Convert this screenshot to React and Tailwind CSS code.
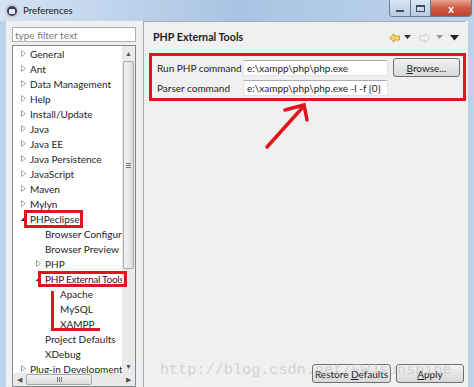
import React from 'react'

const rows = [
  ['General', 0, 'c'],
  ['Ant', 0, 'c'],
  ['Data Management', 0, 'c'],
  ['Help', 0, 'c'],
  ['Install/Update', 0, 'c'],
  ['Java', 0, 'c'],
  ['Java EE', 0, 'c'],
  ['Java Persistence', 0, 'c'],
  ['JavaScript', 0, 'c'],
  ['Maven', 0, 'c'],
  ['Mylyn', 0, 'c'],
  ['PHPeclipse', 0, 'o', 'box1'],
  ['Browser Configuration', 1, null],
  ['Browser Preview Defaults', 1, null],
  ['PHP', 1, 'c'],
  ['PHP External Tools', 1, 'o', 'box2'],
  ['Apache', 2, null],
  ['MySQL', 2, null],
  ['XAMPP', 2, null],
  ['Project Defaults', 1, null],
  ['XDebug', 1, null],
  ['Plug-in Development', 0, 'c'],
]

const indent = ['pl-[5px]', 'pl-[20px]', 'pl-[35px]']

function Twisty({ kind }) {
  if (kind === 'c')
    return (
      <svg width="12" height="15" viewBox="0 0 12 15">
        <path d="M3.5 4.5 L7.5 7.5 L3.5 10.5 Z" fill="none" stroke="#a6a6a6" strokeWidth="1" />
      </svg>
    )
  if (kind === 'o')
    return (
      <svg width="12" height="15" viewBox="0 0 12 15">
        <path d="M7.5 5 L7.5 10 L2.5 10 Z" fill="#333" />
      </svg>
    )
  return <span className="w-[12px]" />
}

function TreeRow({ label, level, kind, box }) {
  return (
    <div className={`h-[15px] flex items-center whitespace-nowrap ${indent[level]}`}>
      <span className="w-[12px] flex-none flex items-center">
        <Twisty kind={kind} />
      </span>
      <span className={`relative text-[#1e1e1e] ${box === 'box2' ? 'tracking-[-0.25px]' : ''}`}>
        {label}
        {box === 'box1' && (
          <span className="absolute z-20 -left-[6px] -right-[4px] -top-[4px] -bottom-[4px] border-[3px] border-[#e0161f]" />
        )}
        {box === 'box2' && (
          <span className="absolute z-20 -left-[7px] -right-[3px] -top-[3px] -bottom-[3px] border-[3px] border-[#e0161f]" />
        )}
      </span>
    </div>
  )
}

function Tree() {
  return (
    <div className="relative flex-1 bg-white border border-[#828790] flex flex-col overflow-hidden">
      <div className="flex flex-1 min-h-0">
        <div className="flex-1 min-w-0">
          {rows.map(r => (
            <TreeRow key={r[0]} label={r[0]} level={r[1]} kind={r[2]} box={r[3]} />
          ))}
        </div>
        {/* vertical scrollbar */}
        <div className="relative z-10 w-[13px] flex-none bg-[#eaeaea] flex flex-col items-center">
          <div className="h-[14px] flex items-center justify-center text-[7px] text-[#555]">▲</div>
          <div className="w-[11px] h-[208px] mt-[1px] rounded-[2px] border border-[#a8a8a8] bg-gradient-to-r from-[#f4f4f4] to-[#dcdcdc] flex items-center justify-center">
            <div className="w-[5px] flex flex-col gap-[1px]">
              <div className="h-px bg-[#777]" />
              <div className="h-px bg-[#777]" />
              <div className="h-px bg-[#777]" />
            </div>
          </div>
          <div className="flex-1" />
          <div className="h-[14px] flex items-center justify-center text-[7px] text-[#555]">▼</div>
        </div>
      </div>
      {/* horizontal scrollbar */}
      <div className="relative z-10 h-[13px] flex-none bg-[#eaeaea] flex items-center">
        <div className="w-[12px] text-center text-[7px] text-[#555]">◀</div>
        <div className="ml-[1px] w-[66px] h-[11px] rounded-[2px] border border-[#a8a8a8] bg-gradient-to-b from-[#f4f4f4] to-[#dcdcdc] flex items-center justify-center gap-[1px]">
          <div className="w-px h-[5px] bg-[#777]" />
          <div className="w-px h-[5px] bg-[#777]" />
          <div className="w-px h-[5px] bg-[#777]" />
        </div>
        <div className="flex-1" />
        <div className="w-[14px] text-center text-[7px] text-[#555]">▶</div>
      </div>
      {/* annotation line under Apache / MySQL / XAMPP */}
      <div className="absolute z-20 left-[38px] top-[245px] w-[49px] h-[40px] border-l-[3px] border-b-[3px] border-[#e0161f]" />
    </div>
  )
}

function Toolbar() {
  return (
    <div className="flex items-center gap-[4px] pr-[6px]">
      <svg width="11" height="10" viewBox="0 0 11 10">
        <path d="M0.5 5 L5 0.8 L5 3 L10.5 3 L10.5 7 L5 7 L5 9.2 Z" fill="#f7d66b" stroke="#c99a2e" strokeWidth="0.9" />
      </svg>
      <svg width="7" height="5" viewBox="0 0 7 5"><path d="M0 0 L7 0 L3.5 4 Z" fill="#333" /></svg>
      <svg width="11" height="10" viewBox="0 0 11 10" className="ml-[4px]">
        <path d="M10.5 5 L6 0.8 L6 3 L0.5 3 L0.5 7 L6 7 L6 9.2 Z" fill="#f4f4f4" stroke="#c8c8c8" strokeWidth="0.9" />
      </svg>
      <svg width="7" height="5" viewBox="0 0 7 5" className="ml-[2px]"><path d="M0 0 L7 0 L3.5 4 Z" fill="#9a9a9a" /></svg>
      <svg width="9" height="6" viewBox="0 0 9 6" className="ml-[3px]"><path d="M0 0 L9 0 L4.5 5.5 Z" fill="#222" /></svg>
    </div>
  )
}

function Field({ value }) {
  return (
    <div className="w-[145px] h-[16px] flex-none bg-white border border-[#e2e3ea] border-t-[#abadb3] flex items-center px-[3px] whitespace-nowrap text-[#1e1e1e]">
      {value}
    </div>
  )
}

function Button({ children, className = '' }) {
  return (
    <div
      className={`h-[19px] flex-none whitespace-nowrap rounded-[3px] border border-[#707070] bg-gradient-to-b from-[#f2f2f2] to-[#d9d9d9] flex items-center justify-center text-[#1e1e1e] ${className}`}
    >
      {children}
    </div>
  )
}

function PagePane() {
  return (
    <div className="relative w-[322px] flex flex-col border-l border-t border-[#a9a9a9]">
      <div className="h-[31px] flex items-center justify-between pl-[9px]">
        <span className="font-bold text-[10.7px] text-[#1e1e1e]">PHP External Tools</span>
        <Toolbar />
      </div>
      <div className="ml-[5px] w-[317px] border-[3px] border-[#e0161f] px-[5px] pt-[2px] pb-[1px] flex flex-col gap-[2px]">
        <div className="flex items-center h-[19px]">
          <span className="w-[86px] flex-none whitespace-nowrap text-[#1e1e1e]">Run PHP command</span>
          <Field value="e:\xampp\php\php.exe" />
          <Button className="ml-[5px] w-[67px]">
            <span><span className="underline">B</span>rowse...</span>
          </Button>
        </div>
        <div className="flex items-center h-[18px]">
          <span className="w-[86px] flex-none whitespace-nowrap text-[#1e1e1e]">Parser command</span>
          <Field value="e:\xampp\php\php.exe -l -f {0}" />
        </div>
      </div>
      <div className="flex-1" />
      <div className="flex justify-end gap-[5px] pr-[1px] mb-[4px]">
        <Button className="w-[79px]">
          <span>Restore <span className="underline">D</span>efaults</span>
        </Button>
        <Button className="w-[68px]">
          <span><span className="underline">A</span>pply</span>
        </Button>
      </div>
      {/* annotation arrow */}
      <svg className="absolute left-0 top-0 pointer-events-none" width="322" height="200" viewBox="0 0 322 200">
        <g stroke="#e0161f" strokeWidth="3.5" strokeLinecap="round" fill="none">
          <path d="M123 125 L159 85" />
          <path d="M141 88 L160 83 L163 98" />
        </g>
      </svg>
    </div>
  )
}

export default function App() {
  return (
    <div
      className="relative w-[474px] h-[387px] overflow-hidden flex flex-col bg-[#bcd3ec] text-[10px] leading-none"
      style={{ fontFamily: 'Lato, "Noto Sans", sans-serif' }}
    >
      {/* title bar */}
      <div className="h-[21px] flex-none flex items-start bg-gradient-to-r from-[#d5e3f3] via-[#a9c4e3] to-[#bed4ec]">
        <div className="mt-[4px] ml-[5px] w-[14px] h-[14px] rounded-full bg-[#3b3f5c] border-[2px] border-[#c9cbd6] flex items-center justify-center">
          <div className="w-[6px] h-[5px] rounded-[1px] bg-[#e8e8f0]" />
        </div>
        <span className="mt-[6px] ml-[4px] text-[9.6px] text-[#1b1b1b]">Preferences</span>
        <div className="flex-1" />
        <div className="flex h-[17px] border border-[#6b7d95] rounded-b-[4px] overflow-hidden border-t-0">
          <div className="w-[21px] bg-gradient-to-b from-[#dbe6f3] to-[#b6cbe4] border-r border-[#6b7d95] flex items-end justify-center pb-[4px]">
            <div className="w-[8px] h-[2px] bg-[#3c4a5e]" />
          </div>
          <div className="w-[20px] bg-gradient-to-b from-[#dbe6f3] to-[#b6cbe4] border-r border-[#6b7d95] flex items-center justify-center">
            <div className="w-[9px] h-[7px] border border-[#3c4a5e] border-t-[2px]" />
          </div>
          <div className="w-[40px] bg-gradient-to-b from-[#e8a393] via-[#cf5a43] to-[#c0432b] flex items-center justify-center text-white font-bold text-[11px]">
            x
          </div>
        </div>
        <div className="w-[2px]" />
      </div>
      {/* body */}
      <div className="flex-1 flex px-[6px] min-h-0">
        <div className="flex-1 bg-[#f0f0f0] flex">
          <div className="ml-[6px] w-[124px] flex flex-col pt-[6px]">
            <div className="h-[15px] flex-none bg-white border border-[#abadb3] flex items-center px-[2px] text-[#7a7a7a]">
              type filter text
            </div>
            <div className="h-[3px] flex-none" />
            <Tree />
          </div>
          <div className="w-[7px]" />
          <PagePane />
        </div>
      </div>
      {/* watermark */}
      <div
        className="absolute left-[160px] top-[363px] text-[15.2px] text-[#bdbdbd]/60 whitespace-nowrap pointer-events-none"
        style={{ fontFamily: '"Liberation Mono", monospace' }}
      >
        http://blog.csdn.net/FWJsunshine
      </div>
    </div>
  )
}
